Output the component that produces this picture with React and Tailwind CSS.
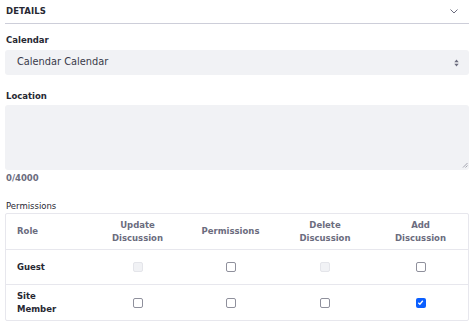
import React from "react";

const font = { fontFamily: '"DejaVu Sans", sans-serif' };

function Box({ state }) {
  if (state === "checked") {
    return (
      <span className="inline-flex h-[10px] w-[10px] items-center justify-center rounded-[2px] bg-[#0b5fff]">
        <svg width="7" height="7" viewBox="0 0 8 8">
          <path d="M1.5 4.2 L3.3 6 L6.6 2" fill="none" stroke="#fff" strokeWidth="1.5" />
        </svg>
      </span>
    );
  }
  if (state === "disabled") {
    return <span className="inline-block h-[10px] w-[10px] rounded-[2px] border border-[#e4e5ea] bg-[#f1f2f5]" />;
  }
  return <span className="inline-block h-[10px] w-[10px] rounded-[2px] border border-[#8f909c] bg-white" />;
}

const cols = "grid grid-cols-[85px_93px_93px_96px_1fr]";

export default function App() {
  return (
    <div className="w-[474px] h-[326px] bg-white px-[5px] text-[#272833] overflow-hidden" style={font}>
      <div className="flex h-[24px] items-center justify-between border-b border-[#cdced9] pl-px">
        <span className="text-[8.5px] font-bold tracking-[0.1px] text-[#272833]">DETAILS</span>
        <svg width="8" height="5" viewBox="0 0 8 5" className="mr-[11px]">
          <path d="M0.5 0.5 L4 4 L7.5 0.5" fill="none" stroke="#6b6c7e" strokeWidth="1" />
        </svg>
      </div>

      <div className="mt-[10px] pl-px text-[8.5px] font-bold leading-[12px]">Calendar</div>
      <div className="mt-[4px] flex h-[25px] items-center justify-between rounded-[3px] bg-[#f1f2f5] pl-[12px] pr-[10px]">
        <span className="text-[9.8px] text-[#393a4a]">Calendar Calendar</span>
        <svg width="5" height="8" viewBox="0 0 5 8">
          <path d="M0.3 3.3 L2.5 0.5 L4.7 3.3 Z" fill="#6b6c7e" />
          <path d="M0.3 4.7 L2.5 7.5 L4.7 4.7 Z" fill="#6b6c7e" />
        </svg>
      </div>

      <div className="mt-[15px] pl-px text-[8.5px] font-bold leading-[12px]">Location</div>
      <div className="relative mt-[3px] h-[65px] rounded-[3px] bg-[#f1f2f5]">
        <svg width="6" height="6" viewBox="0 0 6 6" className="absolute right-[1px] bottom-[2px]">
          <path d="M5.5 1 L1 5.5 M5.5 3.5 L3.5 5.5" stroke="#8f909c" strokeWidth="0.8" />
        </svg>
      </div>
      <div className="mt-[2px] pl-px text-[8.5px] font-bold leading-[12px] text-[#6b6c7e]">0/4000</div>

      <div className="mt-[16px] pl-px text-[8.5px] leading-[12px] text-[#272833]">Permissions</div>
      <div className="mt-[1px] rounded-[2px] border border-[#e7e7ed] text-[8.5px] font-bold">
        <div className={`${cols} h-[36px] items-center border-b border-[#e7e7ed] text-[#6b6c7e] leading-[12.5px]`}>
          <div className="pl-[11px]">Role</div>
          <div className="text-center">Update<br />Discussion</div>
          <div className="text-center">Permissions</div>
          <div className="text-center">Delete<br />Discussion</div>
          <div className="text-center">Add<br />Discussion</div>
        </div>
        <div className={`${cols} h-[35px] items-center border-b border-[#e7e7ed] leading-[12.5px]`}>
          <div className="pl-[11px]">Guest</div>
          <div className="flex justify-center"><Box state="disabled" /></div>
          <div className="flex justify-center"><Box /></div>
          <div className="flex justify-center"><Box state="disabled" /></div>
          <div className="flex justify-center"><Box /></div>
        </div>
        <div className={`${cols} h-[35px] items-center leading-[12.5px]`}>
          <div className="pl-[11px]">Site<br />Member</div>
          <div className="flex justify-center"><Box /></div>
          <div className="flex justify-center"><Box /></div>
          <div className="flex justify-center"><Box /></div>
          <div className="flex justify-center"><Box state="checked" /></div>
        </div>
      </div>
    </div>
  );
}
